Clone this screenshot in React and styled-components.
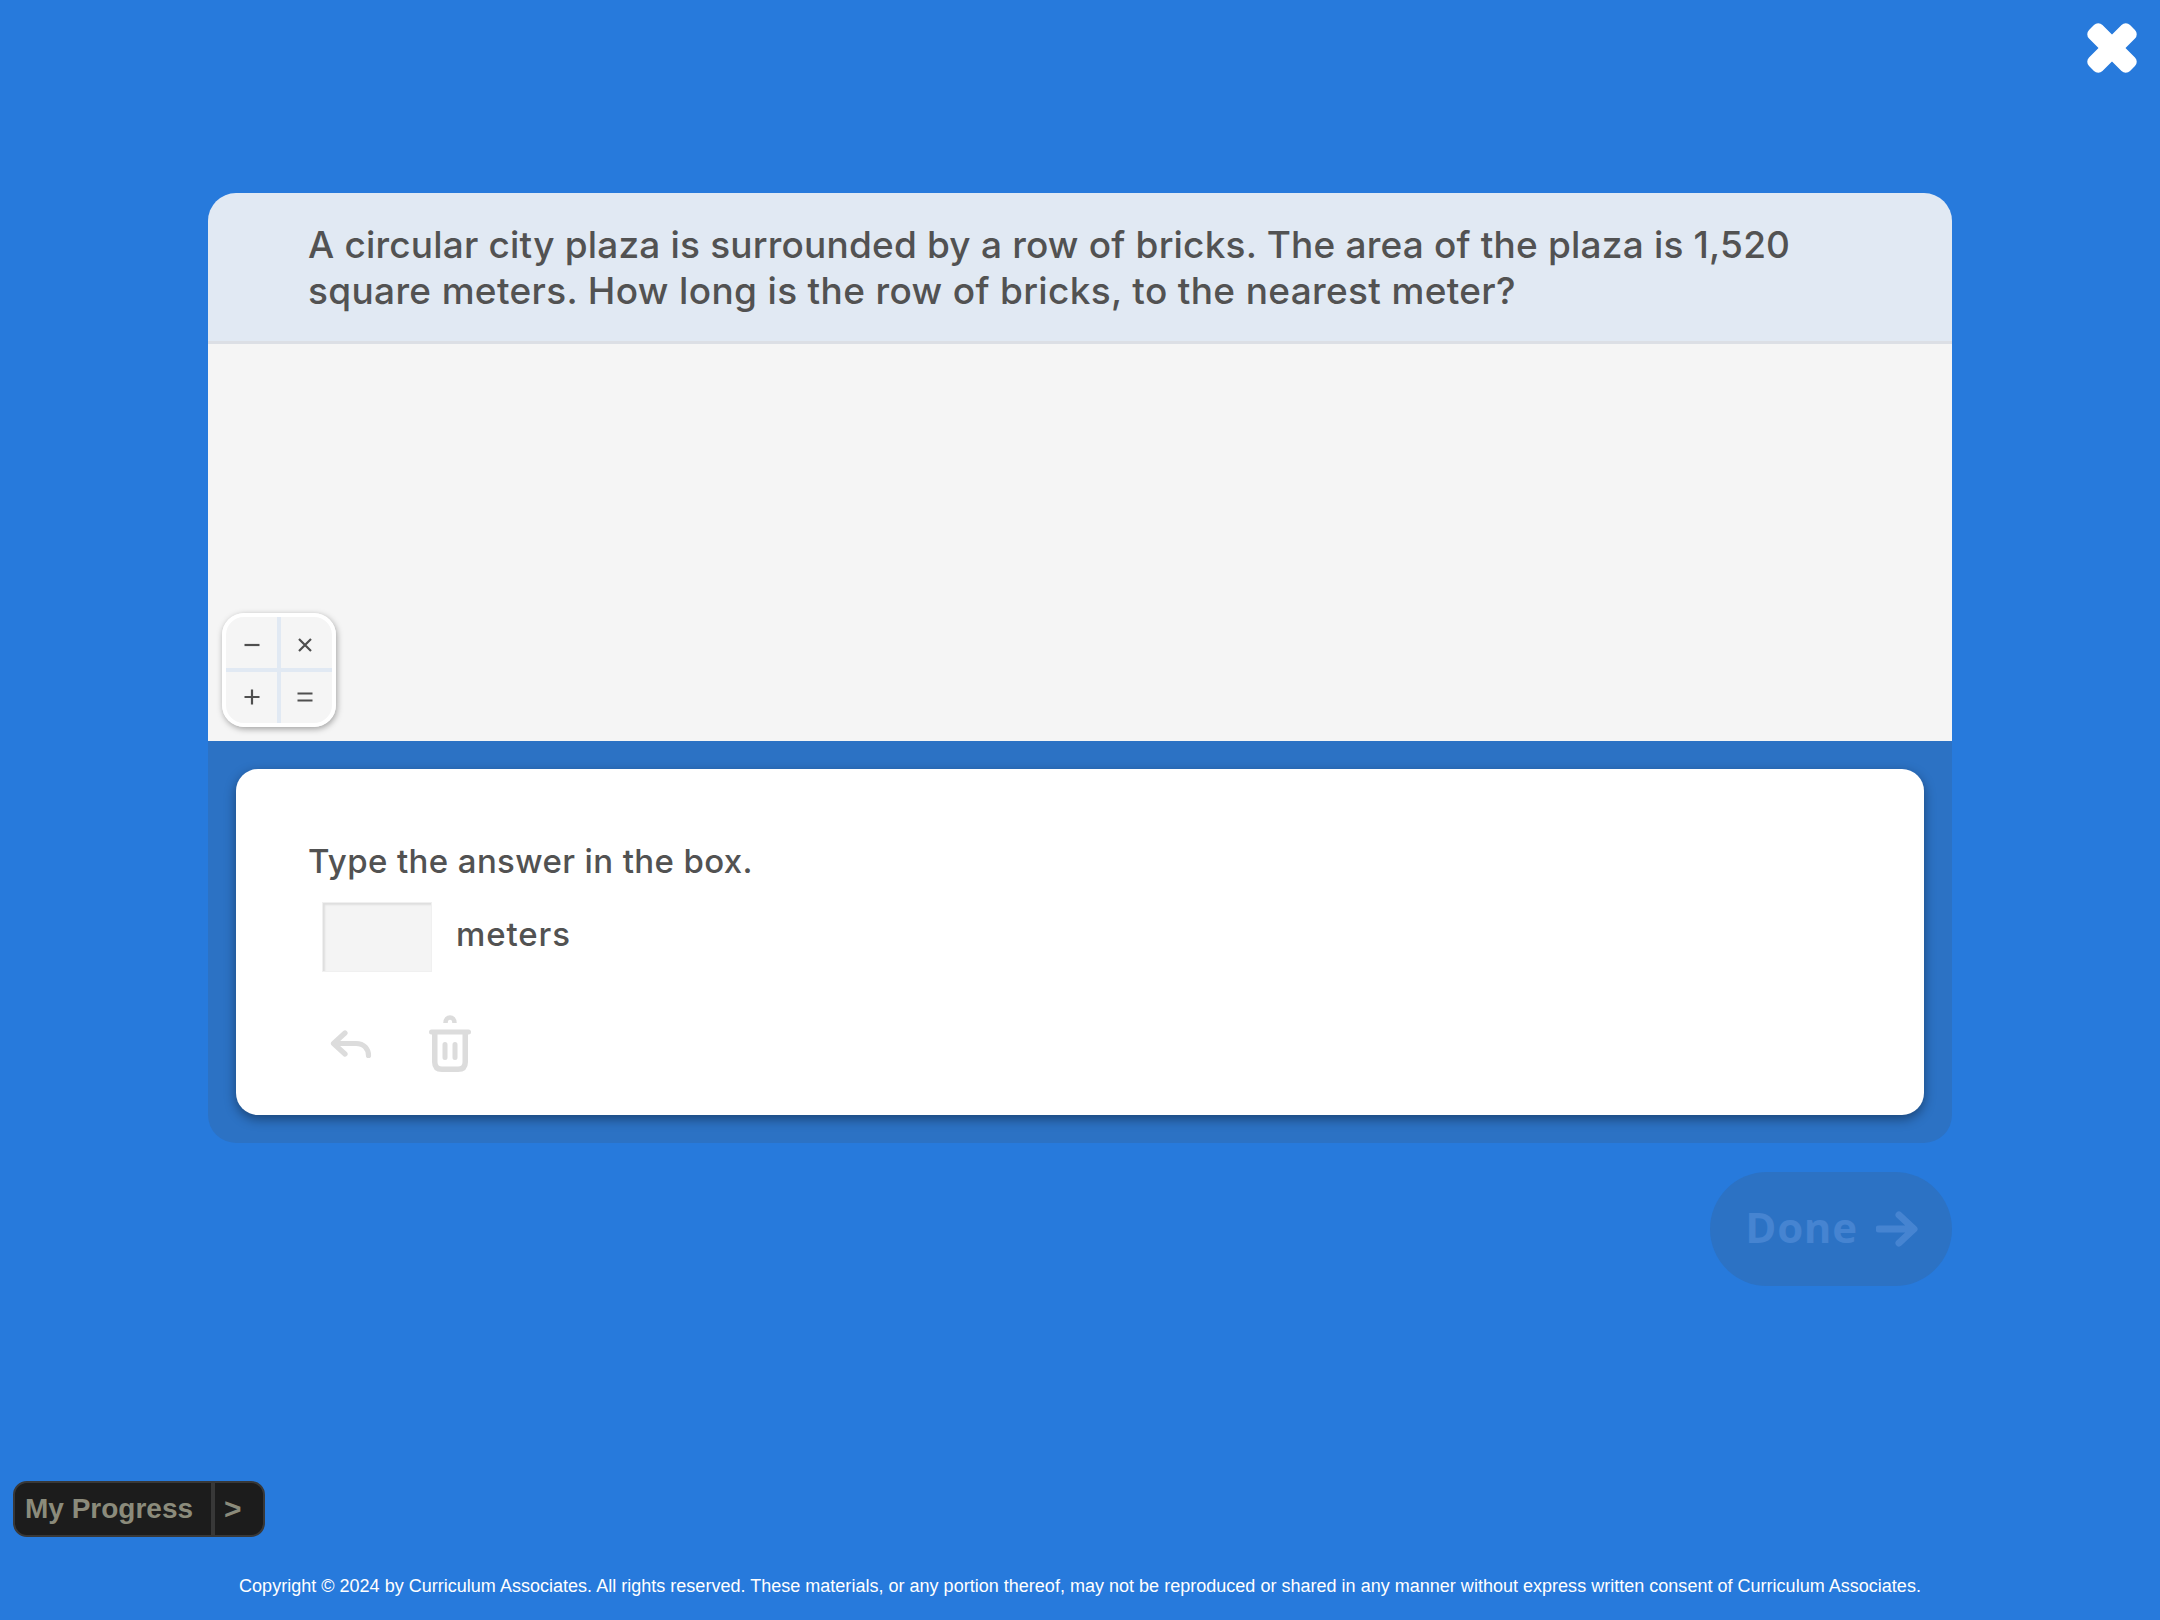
import React from "react";
import styled, { createGlobalStyle } from "styled-components";

const Global = createGlobalStyle`
  html, body { margin: 0; padding: 0; background: #277adc; }
`;

const Page = styled.div`
  position: relative;
  width: 2160px;
  height: 1620px;
  background: #277adc;
  display: flex;
  flex-direction: column;
  overflow: hidden;
  font-family: Inter, "Noto Sans", sans-serif;
`;

const Close = styled.button`
  position: absolute;
  top: 20px;
  right: 20px;
  width: 56px;
  height: 56px;
  padding: 0;
  border: 0;
  background: none;
  display: block;
  filter: blur(0.5px);
`;

const Main = styled.main`
  margin: 193px 208px 0;
  display: flex;
  flex-direction: column;
`;

const Prompt = styled.header`
  box-sizing: border-box;
  height: 151px;
  padding: 29px 100px 0;
  background: #e1e9f3;
  border-radius: 28px 28px 0 0;
  border-bottom: 3px solid #dcdfe5;
  color: #525252;
  font-size: 37px;
  font-weight: 500;
  line-height: 46px;
`;

const PromptLine = styled.span`
  display: block;
  white-space: nowrap;
  letter-spacing: ${(p) => p.$spacing}px;
`;

const Stage = styled.section`
  box-sizing: border-box;
  height: 397px;
  background: #f5f5f5;
  display: flex;
  align-items: flex-end;
  padding: 0 0 14px 14px;
`;

const Keypad = styled.div`
  box-sizing: border-box;
  width: 114px;
  height: 114px;
  padding: 4px;
  background: #f5f5f5;
  border-radius: 22px;
  box-shadow: inset 0 0 0 4px #fff, 1px 2px 6px rgba(0, 0, 0, 0.35);
  display: grid;
  grid-template-columns: 55px 51px;
  grid-template-rows: 55px 51px;
`;

const Key = styled.div`
  display: flex;
  align-items: center;
  justify-content: center;
  color: #4d4d4d;
  border-right: ${(p) => (p.$right ? "4px solid #e1e9f3" : "0")};
  border-bottom: ${(p) => (p.$bottom ? "4px solid #e1e9f3" : "0")};
  padding-top: ${(p) => (p.$bottom ? "5px" : "0")};
  padding-bottom: ${(p) => (p.$bottom ? "0" : "2px")};
  padding-right: ${(p) => (p.$right ? "0" : "4px")};
`;

const AnswerTray = styled.section`
  box-sizing: border-box;
  height: 402px;
  padding: 28px;
  background: #2c72c4;
  border-radius: 0 0 28px 28px;
`;

const AnswerCard = styled.div`
  box-sizing: border-box;
  height: 346px;
  padding: 73px 72px 0;
  background: #fff;
  border-radius: 22px;
  box-shadow: 0 4px 12px rgba(0, 0, 0, 0.4);
  color: #525252;
  display: flex;
  flex-direction: column;
`;

const Instruction = styled.p`
  margin: 0;
  font-size: 33px;
  font-weight: 500;
  line-height: 38px;
  letter-spacing: 0.38px;
`;

const InputRow = styled.div`
  margin: 22px 0 0 14px;
  display: flex;
  align-items: center;
  gap: 24px;
`;

const AnswerBox = styled.div`
  box-sizing: border-box;
  width: 110px;
  height: 70px;
  background: #f4f4f4;
  border: 1px solid #f0f0f0;
  box-shadow: inset 2px 2px 2px rgba(0, 0, 0, 0.09);
`;

const Unit = styled.span`
  font-size: 33px;
  font-weight: 500;
  letter-spacing: 0.9px;
  position: relative;
  top: -3px;
`;

const Tools = styled.div`
  margin: 42px 0 0 22px;
  display: flex;
  align-items: center;
  gap: 56px;
`;

const ActionRow = styled.div`
  margin: 29px 208px 0;
  display: flex;
  justify-content: flex-end;
`;

const DoneButton = styled.button`
  box-sizing: border-box;
  width: 242px;
  height: 114px;
  border: 0;
  border-radius: 57px;
  background: #2c72c4;
  color: #4684d1;
  font-family: "Open Sans", sans-serif;
  font-weight: 700;
  font-size: 42px;
  line-height: 50px;
  letter-spacing: 0.7px;
  display: flex;
  align-items: center;
  justify-content: center;
  gap: 18px;
  padding: 0 0 0 1px;
`;

const DoneLabel = styled.span`
  position: relative;
  top: -2px;
`;

const Footer = styled.footer`
  margin-top: auto;
  display: flex;
  flex-direction: column;
`;

const Progress = styled.div`
  box-sizing: border-box;
  margin-left: 13px;
  width: 252px;
  height: 56px;
  background: #1c1c1c;
  border: 2px solid #383838;
  border-radius: 14px;
  display: flex;
  align-items: center;
  color: #8b8b7b;
  font-family: "Liberation Sans", Arial, sans-serif;
  font-weight: 700;
`;

const ProgressLabel = styled.span`
  box-sizing: border-box;
  width: 200px;
  height: 100%;
  padding-left: 10px;
  font-size: 28px;
  line-height: 52px;
  border-right: 4px solid #383838;
`;

const ProgressArrow = styled.span`
  padding-left: 9px;
  font-size: 30px;
`;

const Copyright = styled.p`
  margin: 36px 0 0;
  height: 47px;
  text-align: center;
  color: #fff;
  font-family: "Liberation Sans", Arial, sans-serif;
  font-size: 18px;
  line-height: 26px;
  letter-spacing: 0.015px;
`;

const GLYPH = "#4f4f4f";
const TOOL = "#dcdcdc";

export default function App() {
  return (
    <Page>
      <Global />
      <Close aria-label="Close">
        <svg width="56" height="56" viewBox="0 0 56 56">
          <rect x="-1" y="18.500" width="58" height="19" rx="6" fill="#fff" transform="rotate(45 28 28)" />
          <rect x="-1" y="18.500" width="58" height="19" rx="6" fill="#fff" transform="rotate(-45 28 28)" />
        </svg>
      </Close>
      <Main>
        <Prompt>
          <PromptLine $spacing={0.186}>A circular city plaza is surrounded by a row of bricks. The area of the plaza is 1,520</PromptLine>
          <PromptLine $spacing={0.34}>square meters. How long is the row of bricks, to the nearest meter?</PromptLine>
        </Prompt>
        <Stage>
          <Keypad>
            <Key $right $bottom>
              <svg width="18" height="18" viewBox="0 0 18 18"><path d="M1.5 9h15" stroke={GLYPH} strokeWidth="2.2" /></svg>
            </Key>
            <Key $bottom>
              <svg width="18" height="18" viewBox="0 0 18 18"><path d="M3 3l12 12M15 3L3 15" stroke={GLYPH} strokeWidth="2.2" /></svg>
            </Key>
            <Key $right>
              <svg width="18" height="18" viewBox="0 0 18 18"><path d="M1.5 9h15M9 1.5v15" stroke={GLYPH} strokeWidth="2.2" /></svg>
            </Key>
            <Key>
              <svg width="18" height="18" viewBox="0 0 18 18"><path d="M1.5 5.500h15M1.5 12.500h15" stroke={GLYPH} strokeWidth="2.2" /></svg>
            </Key>
          </Keypad>
        </Stage>
        <AnswerTray>
          <AnswerCard>
            <Instruction>Type the answer in the box.</Instruction>
            <InputRow>
              <AnswerBox />
              <Unit>meters</Unit>
            </InputRow>
            <Tools>
              <svg width="42" height="30" viewBox="0 0 42 30" fill="none">
                <path d="M15 4 L3.500 14.500 L15 25 M4 14.500 H26 C34 14.500 38.500 20 38.500 26.500" stroke={TOOL} strokeWidth="5.2" strokeLinecap="round" strokeLinejoin="round" />
              </svg>
              <svg width="44" height="59" viewBox="0 0 44 59" fill="none">
                <path d="M17.500 9 C17.500 1.500 26.500 1.500 26.500 9" stroke={TOOL} strokeWidth="4.5" />
                <path d="M3.500 18 H40.500" stroke={TOOL} strokeWidth="5" strokeLinecap="round" />
                <path d="M6.750 18 V48 Q6.750 55.250 14 55.250 H30 Q37.250 55.250 37.250 48 V18" stroke={TOOL} strokeWidth="5.5" />
                <path d="M17 30.500 V43.500 M27 30.500 V43.500" stroke={TOOL} strokeWidth="5" strokeLinecap="round" />
              </svg>
            </Tools>
          </AnswerCard>
        </AnswerTray>
      </Main>
      <ActionRow>
        <DoneButton>
          <DoneLabel>Done</DoneLabel>
          <svg width="42" height="36" viewBox="0 0 42 36" fill="none">
            <path d="M3 18 H37 M23 4 L38 18 L23 32" stroke="#4684d1" strokeWidth="7" strokeLinecap="round" strokeLinejoin="round" />
          </svg>
        </DoneButton>
      </ActionRow>
      <Footer>
        <Progress>
          <ProgressLabel>My Progress</ProgressLabel>
          <ProgressArrow>&gt;</ProgressArrow>
        </Progress>
        <Copyright>
          Copyright © 2024 by Curriculum Associates. All rights reserved. These materials, or any portion thereof, may not be reproduced or shared in any manner without express written consent of Curriculum Associates.
        </Copyright>
      </Footer>
    </Page>
  );
}
